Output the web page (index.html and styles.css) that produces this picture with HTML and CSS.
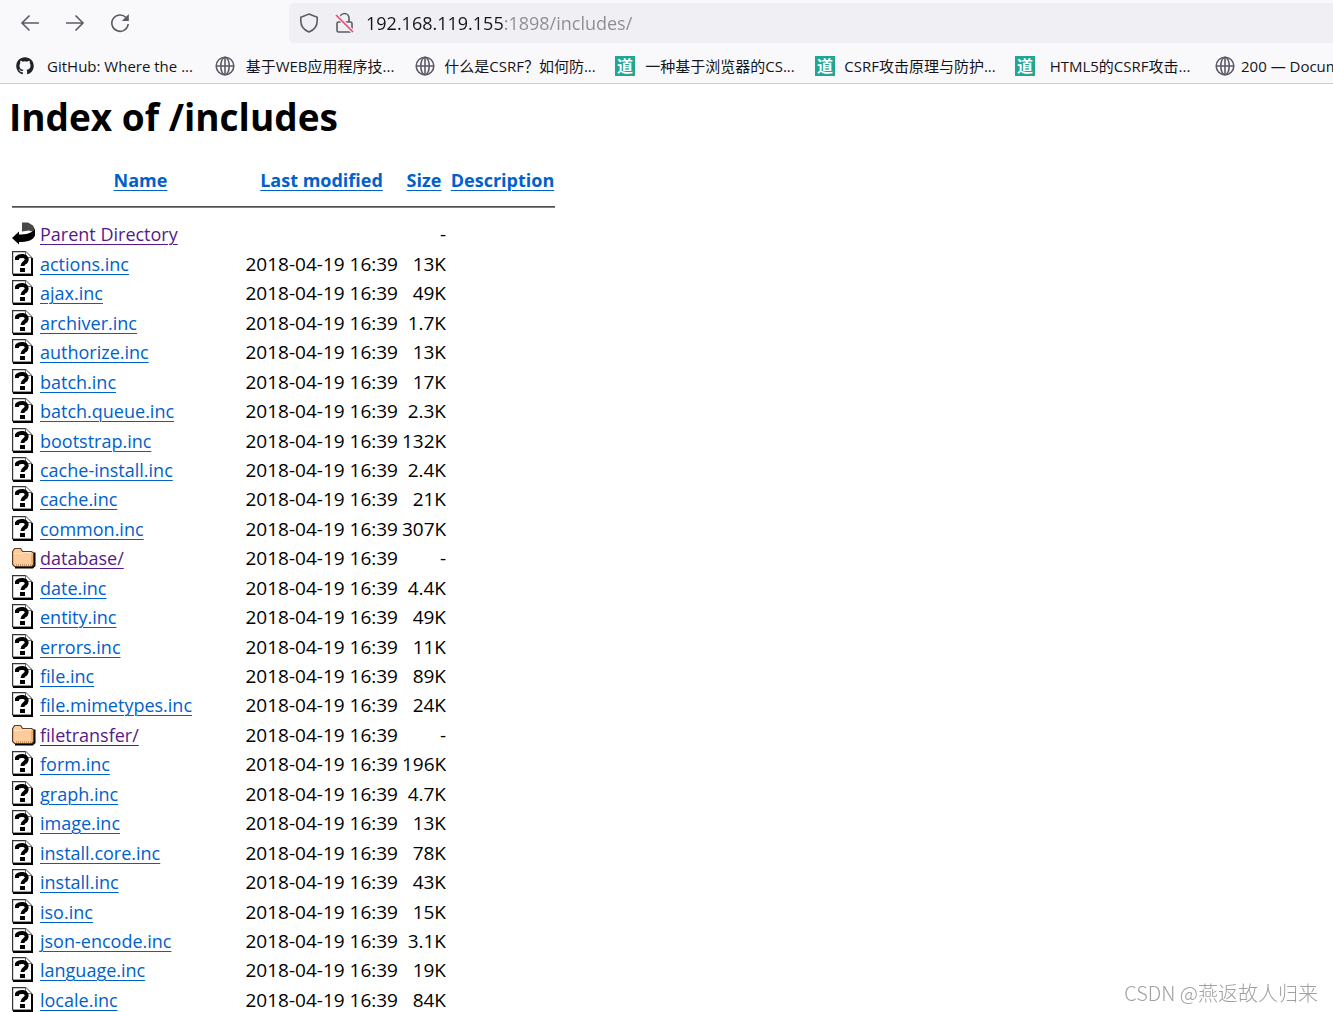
FILE: index.html
```html
<!DOCTYPE html>
<html lang="en">
  <head>
    <meta charset="UTF-8" />
    <meta name="viewport" content="width=device-width, initial-scale=1.0" />
    <title>Index of /includes</title>
    <link rel="stylesheet" href="styles.css">
  </head>
  <body>
    <!-- Shared icons -->
    <svg class="sprite" aria-hidden="true">
      <symbol id="globe" viewBox="0 0 20 20">
        <g fill="none" stroke="#5b5b66" stroke-width="1.6">
          <circle cx="10" cy="10" r="8.8" />
          <ellipse cx="10" cy="10" rx="4.2" ry="8.8" />
          <path d="M1.2 10h17.6M10 1.2v17.6" />
        </g>
      </symbol>
      <symbol id="unknown" viewBox="0 0 24 25">
        <path d="M.6.6h13l6 6V23H.6z" fill="#fff" stroke="#333" stroke-width="1.2" />
        <path d="M20 7v17H1" fill="none" stroke="#000" stroke-width="2" />
        <path d="M13.500.6v6h6" fill="#fff" stroke="#666" stroke-width="1" />
        <path d="M5 9V7C6.500 5 9 4.800 11 5C14.500 5.500 15.500 8.500 14 10.500C12.500 12 10.500 12 10.500 15" fill="none" stroke="#000" stroke-width="4" />
        <path d="M8 17h5v4H8z" />
      </symbol>
      <symbol id="folder" viewBox="0 0 24 22">
        <path d="M3 21h17.500l2-2V6" fill="none" stroke="#000" stroke-width="2" />
        <path d="M.6 5l2-3h6l2 3h9l2 1.500V18l-2 2H2.600l-2-2z" fill="#ffcc99" stroke="#5a4028" stroke-width="1.2" />
        <path d="M2 7h8l1-1h8" fill="none" stroke="#ffe9d0" stroke-width="1" />
        <path d="M4 18.500h15M20 8v10" fill="none" stroke="#996633" stroke-dasharray="1 1" />
      </symbol>
      <symbol id="back" viewBox="0 0 24 24">
        <path d="M10 1l6 0 5 3 2 4v5l-3-3-3-1-7 1z" fill="#484848" />
        <path d="M0 16.500L7 10v3c7 0 12-1 16-5v6c-2 5-8 6.500-16 6.500V23z" />
      </symbol>
    </svg>

    <header class="toolbar">
      <div class="nav">
        <div class="nav-buttons">
          <button type="button" aria-label="Back">
            <svg width="20" height="20" viewBox="0 0 20 20"><path d="M19 10H2M9.500 2.500L2 10l7.500 7.500" /></svg>
          </button>
          <button type="button" aria-label="Forward">
            <svg width="20" height="20" viewBox="0 0 20 20"><path d="M1 10h17M10.500 2.500L18 10l-7.500 7.500" /></svg>
          </button>
          <button type="button" aria-label="Reload">
            <svg width="20" height="20" viewBox="0 0 20 20">
              <path d="M16 4.500A8.200 8.200 0 1 0 18.200 11" />
              <path class="solid" d="M18.800 1v7h-7z" />
            </svg>
          </button>
        </div>
        <div class="urlbar">
          <div class="site-info">
            <svg width="20" height="20" viewBox="0 0 20 20"><path d="M10 1l8.200 3.200v3.600c0 5-3 9.200-8.200 11.200C4.800 17 1.800 12.800 1.800 7.800V4.200z" /></svg>
            <svg width="20" height="22" viewBox="0 0 20 22">
              <path d="M6 10V6a4.500 4.500 0 0 1 9 0v4M4.500 10h12q1.500 0 1.500 1.500v7q0 1.500-1.500 1.500h-12q-1.500 0-1.500-1.500v-7q0-1.500 1.500-1.500z" />
              <path class="slash-gap" d="M1.500 2L19 20" />
              <path class="slash" d="M2 3l17 17" />
            </svg>
          </div>
          <input class="url" type="text" value="192.168.119.155:1898/includes/" aria-label="Address" />
        </div>
      </div>

      <nav class="bookmarks">
        <a href="#">
          <svg width="20" height="20" viewBox="0 0 16 16"><path class="github" d="M8 1C4 1 1 4.100 1 8c0 3.100 2 5.700 4.800 6.600.4.100.5-.2.500-.4v-1.300c-2 .4-2.400-.9-2.400-.9-.3-.8-.8-1-.8-1-.6-.4.100-.4.100-.4.700 0 1.100.7 1.100.7.600 1.100 1.600.8 2 .6.100-.5.300-.8.500-.9C5.200 10.800 3.600 10.200 3.600 7.500c0-.8.300-1.400.7-1.900-.1-.2-.3-.9.100-1.800 0 0 .6-.2 1.900.7a6.600 6.600 0 0 1 3.400 0c1.300-.9 1.900-.7 1.900-.7.400.9.200 1.600.1 1.800.400.500.7 1.100.7 1.900 0 2.700-1.600 3.300-3.200 3.500.300.200.500.700.500 1.300v1.900c0 .2.100.5.500.4C13 13.700 15 11.100 15 8c0-3.900-3-7-7-7z" /></svg>
          <span>GitHub: Where the ...</span>
        </a>
        <a href="#"><svg width="20" height="20"><use href="#globe" /></svg><span>基于WEB应用程序技...</span></a>
        <a href="#"><svg width="20" height="20"><use href="#globe" /></svg><span>什么是CSRF？如何防...</span></a>
        <a href="#"><b class="dao">道</b><span>一种基于浏览器的CS...</span></a>
        <a href="#"><b class="dao">道</b><span>CSRF攻击原理与防护...</span></a>
        <a href="#"><b class="dao">道</b><span>HTML5的CSRF攻击...</span></a>
        <a href="#" class="cut"><svg width="20" height="20"><use href="#globe" /></svg><span>200 — Docum</span></a>
      </nav>
    </header>

    <main class="page">
      <h1>Index of /includes</h1>
      <table>
        <colgroup>
          <col class="col-icon" />
          <col class="col-name" />
          <col class="col-date" />
          <col class="col-size" />
          <col class="col-desc" />
        </colgroup>
        <thead>
          <tr><th></th><th><a href="#">Name</a></th><th><a href="#">Last modified</a></th><th><a href="#">Size</a></th><th><a href="#">Description</a></th></tr>
          <tr><td class="rule" colspan="5"><hr /></td></tr>
        </thead>
        <tbody>
          <tr><td><svg class="icon"><use href="#back" /></svg></td><td><a class="visited" href="#">Parent Directory</a></td><td></td><td>-</td><td></td></tr>
          <tr><td><svg class="icon"><use href="#unknown" /></svg></td><td><a href="#">actions.inc</a></td><td>2018-04-19 16:39</td><td>13K</td><td></td></tr>
          <tr><td><svg class="icon"><use href="#unknown" /></svg></td><td><a href="#">ajax.inc</a></td><td>2018-04-19 16:39</td><td>49K</td><td></td></tr>
          <tr><td><svg class="icon"><use href="#unknown" /></svg></td><td><a href="#">archiver.inc</a></td><td>2018-04-19 16:39</td><td>1.7K</td><td></td></tr>
          <tr><td><svg class="icon"><use href="#unknown" /></svg></td><td><a href="#">authorize.inc</a></td><td>2018-04-19 16:39</td><td>13K</td><td></td></tr>
          <tr><td><svg class="icon"><use href="#unknown" /></svg></td><td><a href="#">batch.inc</a></td><td>2018-04-19 16:39</td><td>17K</td><td></td></tr>
          <tr><td><svg class="icon"><use href="#unknown" /></svg></td><td><a href="#">batch.queue.inc</a></td><td>2018-04-19 16:39</td><td>2.3K</td><td></td></tr>
          <tr><td><svg class="icon"><use href="#unknown" /></svg></td><td><a href="#">bootstrap.inc</a></td><td>2018-04-19 16:39</td><td>132K</td><td></td></tr>
          <tr><td><svg class="icon"><use href="#unknown" /></svg></td><td><a href="#">cache-install.inc</a></td><td>2018-04-19 16:39</td><td>2.4K</td><td></td></tr>
          <tr><td><svg class="icon"><use href="#unknown" /></svg></td><td><a href="#">cache.inc</a></td><td>2018-04-19 16:39</td><td>21K</td><td></td></tr>
          <tr><td><svg class="icon"><use href="#unknown" /></svg></td><td><a href="#">common.inc</a></td><td>2018-04-19 16:39</td><td>307K</td><td></td></tr>
          <tr><td><svg class="icon"><use href="#folder" /></svg></td><td><a class="visited" href="#">database/</a></td><td>2018-04-19 16:39</td><td>-</td><td></td></tr>
          <tr><td><svg class="icon"><use href="#unknown" /></svg></td><td><a href="#">date.inc</a></td><td>2018-04-19 16:39</td><td>4.4K</td><td></td></tr>
          <tr><td><svg class="icon"><use href="#unknown" /></svg></td><td><a href="#">entity.inc</a></td><td>2018-04-19 16:39</td><td>49K</td><td></td></tr>
          <tr><td><svg class="icon"><use href="#unknown" /></svg></td><td><a href="#">errors.inc</a></td><td>2018-04-19 16:39</td><td>11K</td><td></td></tr>
          <tr><td><svg class="icon"><use href="#unknown" /></svg></td><td><a href="#">file.inc</a></td><td>2018-04-19 16:39</td><td>89K</td><td></td></tr>
          <tr><td><svg class="icon"><use href="#unknown" /></svg></td><td><a href="#">file.mimetypes.inc</a></td><td>2018-04-19 16:39</td><td>24K</td><td></td></tr>
          <tr><td><svg class="icon"><use href="#folder" /></svg></td><td><a class="visited" href="#">filetransfer/</a></td><td>2018-04-19 16:39</td><td>-</td><td></td></tr>
          <tr><td><svg class="icon"><use href="#unknown" /></svg></td><td><a href="#">form.inc</a></td><td>2018-04-19 16:39</td><td>196K</td><td></td></tr>
          <tr><td><svg class="icon"><use href="#unknown" /></svg></td><td><a href="#">graph.inc</a></td><td>2018-04-19 16:39</td><td>4.7K</td><td></td></tr>
          <tr><td><svg class="icon"><use href="#unknown" /></svg></td><td><a href="#">image.inc</a></td><td>2018-04-19 16:39</td><td>13K</td><td></td></tr>
          <tr><td><svg class="icon"><use href="#unknown" /></svg></td><td><a href="#">install.core.inc</a></td><td>2018-04-19 16:39</td><td>78K</td><td></td></tr>
          <tr><td><svg class="icon"><use href="#unknown" /></svg></td><td><a href="#">install.inc</a></td><td>2018-04-19 16:39</td><td>43K</td><td></td></tr>
          <tr><td><svg class="icon"><use href="#unknown" /></svg></td><td><a href="#">iso.inc</a></td><td>2018-04-19 16:39</td><td>15K</td><td></td></tr>
          <tr><td><svg class="icon"><use href="#unknown" /></svg></td><td><a href="#">json-encode.inc</a></td><td>2018-04-19 16:39</td><td>3.1K</td><td></td></tr>
          <tr><td><svg class="icon"><use href="#unknown" /></svg></td><td><a href="#">language.inc</a></td><td>2018-04-19 16:39</td><td>19K</td><td></td></tr>
          <tr><td><svg class="icon"><use href="#unknown" /></svg></td><td><a href="#">locale.inc</a></td><td>2018-04-19 16:39</td><td>84K</td><td></td></tr>
        </tbody>
      </table>
    </main>

    <div class="watermark">CSDN @燕返故人归来</div>
  </body>
</html>
```
FILE: styles.css
```css
body {
  margin: 0;
  height: 100vh;
  overflow: hidden;
  font-family: "Open Sans", "Noto Sans CJK SC", sans-serif;
  background-color: #fff;
  color: #000;
}

.sprite {
  display: none;
}

/* Browser toolbar */
.toolbar {
  background-color: #f9f9fb;
  border-bottom: 1px solid #ccccd1;
  color: #15141a;
  overflow: hidden;
}

.toolbar svg {
  flex: none;
}

.nav {
  display: flex;
  align-items: center;
  padding: 3px 0 5px 7px;
}

.nav path {
  fill: none;
  stroke: #5b5b66;
  stroke-width: 1.6;
}

.nav-buttons {
  display: flex;
  width: 282px;
}

.nav-buttons button {
  display: flex;
  align-items: center;
  justify-content: center;
  width: 45px;
  height: 40px;
  padding: 0;
  border: none;
  background: none;
}

.nav .solid {
  fill: #5b5b66;
  stroke: none;
}

.urlbar {
  display: flex;
  flex: 1;
  align-items: center;
  gap: 12px;
  height: 40px;
  padding-left: 10px;
  border-radius: 5px 0 0 5px;
  background-color: #f0f0f4;
}

.site-info {
  display: flex;
  align-items: center;
  gap: 15px;
}

.nav .slash-gap {
  stroke: #f0f0f4;
  stroke-width: 4;
}

.nav .slash {
  stroke: #f0436a;
}

/* host is dark, port and path are grey */
.url {
  flex: 1;
  padding: 0;
  border: none;
  outline: none;
  font: 18px "Open Sans", sans-serif;
  color: transparent;
  background: linear-gradient(to right, #15141a 137px, #8b8b92 137px);
  -webkit-background-clip: text;
  background-clip: text;
}

.bookmarks {
  display: flex;
  height: 35px;
  padding-left: 15px;
}

.bookmarks a {
  display: flex;
  flex: none;
  align-items: center;
  gap: 8px;
  width: 200px;
  font-size: 15px;
  color: #15141a;
  text-decoration: none;
  white-space: nowrap;
}

.bookmarks span {
  width: 154px;
  text-align: center;
}

.bookmarks .cut {
  gap: 6px;
}

.bookmarks .cut span {
  text-align: left;
}

.github {
  fill: #1f2328;
}

.dao {
  width: 20px;
  height: 20px;
  background-color: #1fa695;
  color: #fff;
  font-size: 16px;
  line-height: 20px;
  text-align: center;
}

/* Directory listing */
.page {
  padding: 0 9px;
}

h1 {
  margin: 7px 0 23px;
  font-size: 37px;
  line-height: 52px;
}

table {
  margin-left: 3px;
  border-collapse: collapse;
  table-layout: fixed;
  width: 543px;
  font-size: 19px;
  line-height: 1.55;
}

.col-icon {
  width: 28px;
}

.col-name {
  width: 205px;
}

.col-date {
  width: 157px;
}

.col-size {
  width: 48px;
}

.col-desc {
  width: 105px;
}

th,
td {
  padding: 0 4px 0 0;
  white-space: nowrap;
}

th:last-child,
td:last-child {
  padding-right: 0;
}

td:first-child {
  vertical-align: top;
}

td:nth-child(3),
td:nth-child(4) {
  text-align: right;
}

table a {
  font-size: 18px;
  color: #0061cc;
  text-decoration-thickness: 1px;
  text-underline-offset: 3px;
}

table a.visited {
  color: #551a8b;
}

.rule hr {
  height: 1px;
  margin: 11px 0 12px;
  border: none;
  border-top: 1px solid #505050;
  background-color: #808080;
}

.icon {
  display: block;
  width: 24px;
  height: 25px;
  margin-top: 1px;
}

.watermark {
  position: fixed;
  right: 15px;
  bottom: 5px;
  font-family: "Noto Sans CJK SC", sans-serif;
  font-size: 20px;
  font-weight: 300;
  color: #a0a0a0;
}
```
